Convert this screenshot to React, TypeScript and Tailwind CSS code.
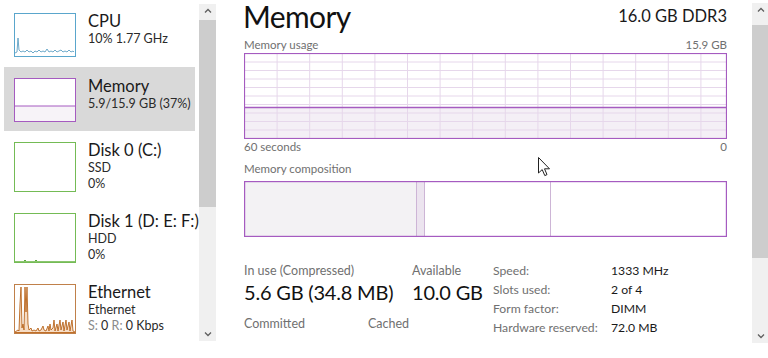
import React from "react";

const font = { fontFamily: 'Lato, "Noto Sans", sans-serif' };

function Chevron({ up }: { up?: boolean }) {
  return (
    <svg width="8" height="6" viewBox="0 0 8 6">
      <path d={up ? "M1 4.5 L4 1.5 L7 4.5" : "M1 1.5 L4 4.5 L7 1.5"} stroke="#606060" strokeWidth="1.3" fill="none" />
    </svg>
  );
}

function Scrollbar({ thumbTop, thumbH, h }: { thumbTop: number; thumbH: number; h: number }) {
  return (
    <div className="relative w-[17px] bg-[#f0f0f0]" style={{ height: h }}>
      <div className="absolute left-0 top-[4px] flex w-full justify-center">
        <Chevron up />
      </div>
      <div className="absolute left-0 w-full bg-[#cdcdcd]" style={{ top: thumbTop, height: thumbH }} />
      <div className="absolute bottom-[4px] left-0 flex w-full justify-center">
        <Chevron />
      </div>
    </div>
  );
}

function CpuThumb() {
  const pts = "1,40 3,39 4,25 5,37 7,39 9,38 11,39 13,37 15,39 17,38 19,40 21,38 23,39 25,37 27,39 29,38 31,39 33,36 35,39 37,38 39,39 41,37 43,39 45,38 47,37 49,39 51,38 53,39 55,37 57,39 59,38 60,39";
  return (
    <svg width="62" height="44" className="block">
      <rect x="0.5" y="0.5" width="61" height="43" fill="white" stroke="#5aa6cc" />
      <polyline points={pts} fill="none" stroke="#4a94bd" strokeWidth="0.8" />
    </svg>
  );
}

function MemThumb() {
  return (
    <svg width="62" height="44" className="block">
      <rect x="0.5" y="0.5" width="61" height="43" fill="white" stroke="#a55bc0" />
      <rect x="1" y="28" width="60" height="15" fill="#f7f3f8" />
      <line x1="1" y1="28" x2="61" y2="28" stroke="#a55bc0" strokeWidth="1" />
    </svg>
  );
}

function DiskThumb({ dots }: { dots?: boolean }) {
  return (
    <svg width="62" height="50" className="block">
      <rect x="0.5" y="0.5" width="61" height="49" fill="white" stroke="#74bb55" />
      {dots && (
        <>
          <rect x="10" y="47" width="2" height="2" fill="#5aa83a" />
          <rect x="21" y="47" width="2" height="2" fill="#5aa83a" />
          <line x1="1" y1="48.5" x2="61" y2="48.5" stroke="#8bc66f" strokeWidth="1" />
        </>
      )}
    </svg>
  );
}

function EthThumb() {
  const pts = "1,48 4,46 5,47 6,20 7,3 8,44 9,40 10,46 11,3 12,28 13,3 14,40 15,46 17,44 18,47 20,46 22,47 24,44 25,47 27,46 29,42 30,46 32,47 34,42 35,47 36,40 37,46 39,44 40,36 41,47 43,40 44,47 46,36 47,46 49,38 50,47 52,36 53,46 55,38 56,47 58,36 59,47 61,48";
  return (
    <svg width="62" height="50" className="block">
      <rect x="0.5" y="0.5" width="61" height="49" fill="white" stroke="#c0804a" />
      <polygon points={pts + " 61,49 1,49"} fill="#f6dcc4" />
      <polyline points={pts} fill="none" stroke="#b8641c" strokeWidth="0.9" />
      <line x1="1" y1="48.5" x2="61" y2="48.5" stroke="#c0702a" strokeWidth="1" />
    </svg>
  );
}

function SideRow({
  h,
  selected,
  thumb,
  title,
  lines,
  pt,
}: {
  h: number;
  selected?: boolean;
  thumb: React.ReactNode;
  title: string;
  lines: React.ReactNode[];
  pt: number;
}) {
  return (
    <div
      className={`ml-[4px] flex w-[191px] items-start ${selected ? "bg-[#d9d9d9]" : ""}`}
      style={{ height: h, paddingTop: pt }}
    >
      <div className="ml-[10px] shrink-0">{thumb}</div>
      <div className="ml-[12px] -mt-[2px] flex flex-col whitespace-nowrap">
        <div className="text-[16.5px] leading-[20px] text-[#1a1a1a]">{title}</div>
        {lines.map((l, i) => (
          <div key={i} className="text-[12.5px] leading-[16px] text-[#2a2a2a]">
            {l}
          </div>
        ))}
      </div>
    </div>
  );
}

function UsageChart() {
  const W = 482;
  const H = 85;
  const vlines: number[] = [];
  for (let x = 32.6; x < W; x += 32.6) vlines.push(x);
  const hlines: number[] = [];
  for (let i = 1; i < 10; i++) hlines.push(i * 8.5);
  const used = 54;
  return (
    <svg width={W + 1} height={H + 1} className="block">
      <rect x="0.5" y="0.5" width={W} height={H} fill="white" />
      <rect x="1" y={used} width={W - 1} height={H - used} fill="#f4eff6" />
      {vlines.map((x) => (
        <line key={"v" + x} x1={x + 0.5} y1="1" x2={x + 0.5} y2={H} stroke="#e6d7eb" strokeWidth="1" />
      ))}
      {hlines.map((y) => (
        <line key={"h" + y} x1="1" y1={y + 0.5} x2={W} y2={y + 0.5} stroke="#e6d7eb" strokeWidth="1" />
      ))}
      <line x1="1" y1={used + 0.5} x2={W} y2={used + 0.5} stroke="#a55bc0" strokeWidth="1.4" />
      <rect x="0.5" y="0.5" width={W} height={H} fill="none" stroke="#a55bc0" strokeWidth="1.2" />
    </svg>
  );
}

function CompChart() {
  const W = 482;
  const H = 55;
  return (
    <svg width={W + 1} height={H + 1} className="block">
      <rect x="0.5" y="0.5" width={W} height={H} fill="white" />
      <rect x="1" y="1" width="171" height={H - 1} fill="#f3f2f4" />
      <rect x="172" y="1" width="8" height={H - 1} fill="#ece4ef" />
      <line x1="172.5" y1="1" x2="172.5" y2={H} stroke="#cdb5d6" />
      <line x1="180.5" y1="1" x2="180.5" y2={H} stroke="#cdb5d6" />
      <line x1="306.5" y1="1" x2="306.5" y2={H} stroke="#cdb5d6" />
      <rect x="0.5" y="0.5" width={W} height={H} fill="none" stroke="#a55bc0" strokeWidth="1.4" />
    </svg>
  );
}

function Cursor() {
  return (
    <svg width="14" height="21" viewBox="0 0 14 21" className="absolute left-[538px] top-[157px]">
      <path d="M0.5 0.5 L0.5 16 L4.2 12.6 L6.8 18.6 L9 17.6 L6.5 11.8 L11.5 11.8 Z" fill="white" stroke="#222" strokeWidth="1" strokeLinejoin="round" />
    </svg>
  );
}

export default function App() {
  return (
    <div className="relative flex h-[358px] w-[768px] overflow-hidden bg-white" style={font}>
      {/* Sidebar */}
      <div className="flex w-[217px] shrink-0">
        <div className="flex w-[199px] flex-col pt-[3px]">
          <SideRow h={64} pt={10} thumb={<CpuThumb />} title="CPU" lines={["10% 1.77 GHz"]} />
          <SideRow h={64} pt={11} selected thumb={<MemThumb />} title="Memory" lines={["5.9/15.9 GB (37%)"]} />
          <SideRow h={71} pt={11} thumb={<DiskThumb />} title="Disk 0 (C:)" lines={["SSD", "0%"]} />
          <SideRow h={71} pt={11} thumb={<DiskThumb dots />} title="Disk 1 (D: E: F:)" lines={["HDD", "0%"]} />
          <SideRow
            h={71}
            pt={11}
            thumb={<EthThumb />}
            title="Ethernet"
            lines={[
              "Ethernet",
              <span key="s">
                <span className="text-[#8a8a8a]">S: </span>0 <span className="text-[#8a8a8a]">R: </span>0 Kbps
              </span>,
            ]}
          />
        </div>
        <div className="pt-[4px]">
          <Scrollbar thumbTop={16} thumbH={187} h={337} />
        </div>
      </div>

      {/* Main */}
      <div className="ml-[27px] flex w-[483px] shrink-0 flex-col">
        <div className="flex h-[36px] items-start justify-between">
          <div className="-ml-[1px] -mt-[1px] text-[30px] leading-[34px] tracking-[-0.6px] text-[#111]">Memory</div>
          <div className="mt-[6px] text-[16.5px] leading-[20px] text-[#1a1a1a]">16.0 GB DDR3</div>
        </div>
        <div className="flex h-[17px] items-center justify-between text-[11.5px] text-[#707070]">
          <span>Memory usage</span>
          <span>15.9 GB</span>
        </div>
        <UsageChart />
        <div className="flex h-[16px] items-center justify-between text-[11.5px] text-[#707070]">
          <span>60 seconds</span>
          <span>0</span>
        </div>
        <div className="mt-[6px] flex h-[15px] items-center text-[11.5px] text-[#707070]">
          <span>Memory composition</span>
        </div>
        <div className="mt-[5px]">
          <CompChart />
        </div>

        <div className="mt-[26px] flex">
          <div className="flex w-[249px] flex-col">
            <div className="flex">
              <div className="flex w-[168px] flex-col">
                <div className="text-[12.5px] leading-[16px] text-[#707070]">In use (Compressed)</div>
                <div className="text-[20px] leading-[27px] tracking-[-0.2px] text-[#111]">5.6 GB (34.8 MB)</div>
              </div>
              <div className="flex flex-col">
                <div className="text-[12.5px] leading-[16px] text-[#707070]">Available</div>
                <div className="text-[20px] leading-[27px] tracking-[-0.2px] text-[#111]">10.0 GB</div>
              </div>
            </div>
            <div className="mt-[10px] flex text-[12.5px] leading-[16px] text-[#707070]">
              <div className="w-[124px]">Committed</div>
              <div>Cached</div>
            </div>
          </div>
          <div className="grid grid-cols-[118px_auto] gap-y-[3px] text-[12.2px] leading-[16px]">
            <div className="text-[#707070]">Speed:</div>
            <div className="text-[#1a1a1a]">1333 MHz</div>
            <div className="text-[#707070]">Slots used:</div>
            <div className="text-[#1a1a1a]">2 of 4</div>
            <div className="text-[#707070]">Form factor:</div>
            <div className="text-[#1a1a1a]">DIMM</div>
            <div className="text-[#707070]">Hardware reserved:</div>
            <div className="text-[#1a1a1a]">72.0 MB</div>
          </div>
        </div>
      </div>

      {/* Right scrollbar */}
      <div className="ml-[25px] pt-[3px]">
        <Scrollbar thumbTop={22} thumbH={233} h={340} />
      </div>

      <Cursor />
    </div>
  );
}
